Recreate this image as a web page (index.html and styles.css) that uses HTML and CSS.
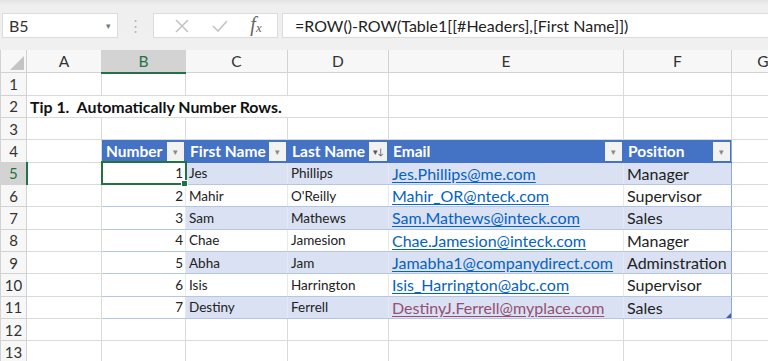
FILE: index.html
```html
<!DOCTYPE html>
<html lang="en">
<head>
    <meta charset="UTF-8">
    <title>Table1 - Automatically Number Rows</title>
    <link rel="stylesheet" href="styles.css">
</head>
<body>
    <div class="toolbar">
        <div class="namebox"><span>B5</span><span class="caret">&#9662;</span></div>
        <div class="grip">&#8942;</div>
        <div class="fbuttons">
            <svg class="fbtn" width="14" height="14" viewBox="0 0 14 14"><path d="M1 1 L13 13 M13 1 L1 13" stroke="#c4c4c4" stroke-width="1.6" fill="none"/></svg>
            <svg class="fbtn" width="16" height="14" viewBox="0 0 16 14"><path d="M1 7 L6 12 L15 2" stroke="#c4c4c4" stroke-width="1.6" fill="none"/></svg>
            <span class="fx">f<sub>x</sub></span>
        </div>
        <div class="formula">=ROW()-ROW(Table1[[#Headers],[First Name]])</div>
    </div>

    <table class="grid">
        <colgroup>
            <col class="c-rh"><col class="c-a"><col class="c-b"><col class="c-c"><col class="c-d"><col class="c-e"><col class="c-f"><col class="c-g">
        </colgroup>
        <tr class="colhead">
            <th class="corner"><span class="tri"></span></th>
            <th>A</th><th class="sel">B</th><th>C</th><th>D</th><th>E</th><th>F</th><th>G</th>
        </tr>
        <tr><th class="rh">1</th><td></td><td></td><td></td><td></td><td></td><td></td><td></td></tr>
        <tr><th class="rh">2</th><td class="title" colspan="4">Tip 1.&nbsp; Automatically Number Rows.</td><td></td><td></td><td></td></tr>
        <tr><th class="rh">3</th><td></td><td></td><td></td><td></td><td></td><td></td><td></td></tr>
        <tr class="thead">
            <th class="rh">4</th><td></td>
            <td class="hd">Number<span class="filt">&#9662;</span></td>
            <td class="hd">First Name<span class="filt">&#9662;</span></td>
            <td class="hd">Last Name<span class="filt sort">&#9662;&#8595;</span></td>
            <td class="hd">Email<span class="filt">&#9662;</span></td>
            <td class="hd last">Position<span class="filt">&#9662;</span></td>
            <td></td>
        </tr>
        <tr class="band">
            <th class="rh selrow">5</th><td></td>
            <td class="num active">1<span class="handle"></span></td><td class="sm">Jes</td><td class="sm">Phillips</td>
            <td class="mail"><a href="#">Jes.Phillips@me.com</a></td><td class="pos last">Manager</td><td></td>
        </tr>
        <tr class="plain">
            <th class="rh">6</th><td></td>
            <td class="num">2</td><td class="sm">Mahir</td><td class="sm">O'Reilly</td>
            <td class="mail"><a href="#">Mahir_OR@nteck.com</a></td><td class="pos last">Supervisor</td><td></td>
        </tr>
        <tr class="band">
            <th class="rh">7</th><td></td>
            <td class="num">3</td><td class="sm">Sam</td><td class="sm">Mathews</td>
            <td class="mail"><a href="#">Sam.Mathews@inteck.com</a></td><td class="pos last">Sales</td><td></td>
        </tr>
        <tr class="plain">
            <th class="rh">8</th><td></td>
            <td class="num">4</td><td class="sm">Chae</td><td class="sm">Jamesion</td>
            <td class="mail"><a href="#">Chae.Jamesion@inteck.com</a></td><td class="pos last">Manager</td><td></td>
        </tr>
        <tr class="band">
            <th class="rh">9</th><td></td>
            <td class="num">5</td><td class="sm">Abha</td><td class="sm">Jam</td>
            <td class="mail"><a href="#">Jamabha1@companydirect.com</a></td><td class="pos last">Adminstration</td><td></td>
        </tr>
        <tr class="plain">
            <th class="rh">10</th><td></td>
            <td class="num">6</td><td class="sm">Isis</td><td class="sm">Harrington</td>
            <td class="mail"><a href="#">Isis_Harrington@abc.com</a></td><td class="pos last">Supervisor</td><td></td>
        </tr>
        <tr class="band lastrow">
            <th class="rh">11</th><td></td>
            <td class="num">7</td><td class="sm">Destiny</td><td class="sm">Ferrell</td>
            <td class="mail"><a class="visited" href="#">DestinyJ.Ferrell@myplace.com</a></td><td class="pos last">Sales<span class="resize"></span></td><td></td>
        </tr>
        <tr><th class="rh">12</th><td></td><td></td><td></td><td></td><td></td><td></td><td></td></tr>
        <tr><th class="rh">13</th><td></td><td></td><td></td><td></td><td></td><td></td><td></td></tr>
    </table>
</body>
</html>
```

FILE: styles.css
```css
body { margin: 0; width: 768px; height: 361px; overflow: hidden; background: #fff; font-family: Lato, "Liberation Sans", sans-serif; color: #222; }

/* formula bar */
.toolbar { height: 50px; box-sizing: border-box; padding-top: 13px; display: flex; align-items: flex-start; background: linear-gradient(#e2e2e2 0, #efefef 5px, #f0f0f0 100%); }
.namebox { width: 116px; height: 25px; margin-left: 2px; box-sizing: border-box; background: #fff; border: 1px solid #dcdcdc; display: flex; align-items: center; justify-content: space-between; padding: 0 6px 0 6px; font-size: 16px; color: #333; }
.caret { font-size: 9px; color: #777; }
.grip { width: 35px; text-align: center; color: #b8b8b8; font-size: 15px; line-height: 25px; }
.fbuttons { width: 125px; height: 25px; box-sizing: border-box; background: #fff; border: 1px solid #dcdcdc; display: flex; align-items: center; justify-content: space-around; padding: 0 4px 0 10px; }
.fx { font-family: "Liberation Serif", serif; font-style: italic; font-size: 20px; line-height: 20px; color: #666; }
.fx sub { font-size: 13px; vertical-align: -1px; }
.formula { flex: 1; height: 25px; margin-left: 4px; box-sizing: border-box; background: #fff; border: 1px solid #dcdcdc; border-right: none; padding-left: 12px; font-size: 16px; line-height: 23px; color: #222; white-space: nowrap; }

/* grid */
.grid { border-collapse: collapse; table-layout: fixed; width: 794px; }
.c-rh { width: 26px; } .c-a { width: 75px; } .c-b { width: 84px; } .c-c { width: 102px; }
.c-d { width: 101px; } .c-e { width: 235px; } .c-f { width: 108px; } .c-g { width: 63px; }
.grid tr { height: 22.35px; }
.grid tr.colhead { height: 22.7px; }
.grid td, .grid th { border: 1px solid #dadada; padding: 0 3px; white-space: nowrap; overflow: visible; vertical-align: middle; }
.colhead th { background: #f7f7f7; border-color: #d2d2d2; border-top: none; font-weight: normal; font-size: 15.5px; color: #333; }
.colhead th.sel { background: #d3d3d3; color: #217346; border-bottom: 2px solid #217346; }
.corner { position: relative; }
.tri { position: absolute; right: 2px; bottom: 2px; width: 0; height: 0; border-left: 14px solid transparent; border-bottom: 14px solid #c4c4c4; }
.rh { background: #f7f7f7; font-weight: normal; font-size: 15px; color: #333; text-align: center; border-color: #d2d2d2 !important; padding: 0 !important; }
.rh.selrow { background: #d3d3d3; color: #217346; border-right: 2px solid #217346 !important; }

.title { font-weight: bold; font-size: 15.9px; color: #111; padding-left: 4px; }

/* table1 */
.thead .hd { background: #4472c4; color: #fff; font-weight: bold; font-size: 15.5px; border-color: #4472c4; position: relative; padding-left: 4px; }
.filt { position: absolute; right: 1px; top: 2px; width: 17px; height: 19px; background: #f2f2f2; color: #888; font-size: 9px; font-weight: normal; text-align: center; line-height: 19px; }
.filt.sort { width: 18px; color: #555; font-size: 9px; letter-spacing: -1px; }
.band td:not(:first-of-type):not(:last-child), .plain td:not(:first-of-type):not(:last-child) { border-top: 1px solid #b4c6e7; border-bottom: 1px solid #b4c6e7; border-left-color: #e4e9f3; border-right-color: #e4e9f3; }
.band td:not(:first-of-type):not(:last-child) { background: #d9e1f2; }
.band td:nth-of-type(2), .plain td:nth-of-type(2) { background: #fff !important; }
td.last { border-right: 1px solid #8ea9db !important; }
.num { text-align: right; font-size: 13.5px; padding-right: 2px !important; }
.sm { font-size: 13.5px; padding-left: 3px; }
.mail { font-size: 16px; padding-left: 2px; }
.mail a { color: #0563c1; text-decoration: underline; text-underline-offset: 2px; }
.mail a.visited { color: #954f72; }
.pos { font-size: 16px; padding-left: 4px; position: relative; }
.active { position: relative; outline: 2px solid #217346; outline-offset: -1px; }
.handle { position: absolute; right: -3px; bottom: -3px; width: 5px; height: 5px; background: #217346; border: 1px solid #fff; }
.resize { position: absolute; right: 0; bottom: 0; width: 0; height: 0; border-left: 5px solid transparent; border-bottom: 5px solid #3f5eb0; }
```
